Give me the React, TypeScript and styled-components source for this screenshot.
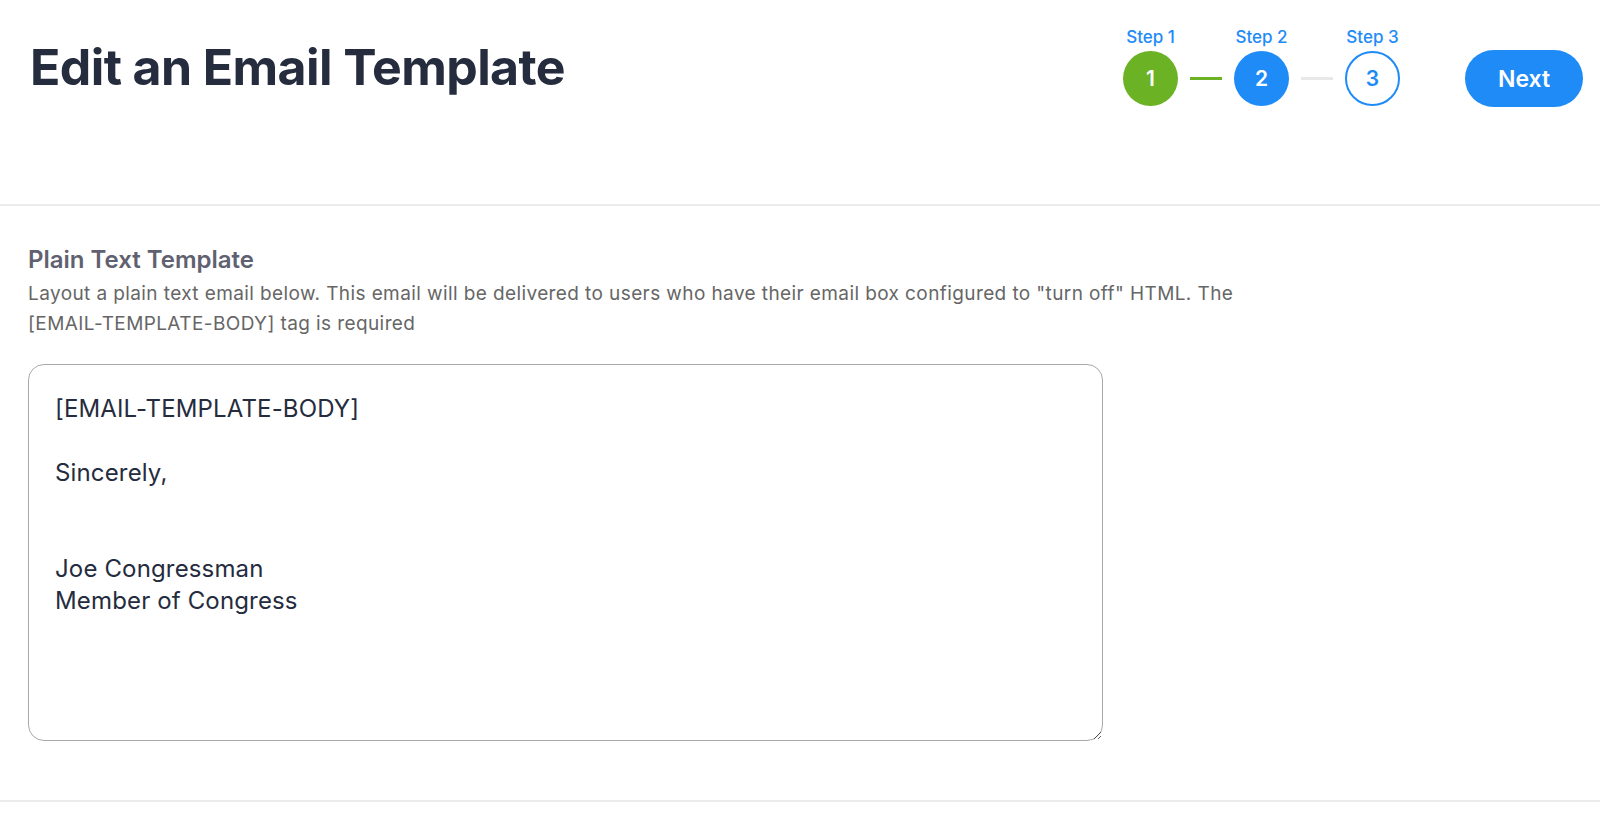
import React from "react";
import styled, { createGlobalStyle } from "styled-components";

const GlobalStyle = createGlobalStyle`
  body {
    margin: 0;
    background: #ffffff;
    font-family: "Inter", "Lato", sans-serif;
    color: #252c3e;
  }
`;

const steps = [
  { label: "Step 1", state: "done" },
  { label: "Step 2", state: "active" },
  { label: "Step 3", state: "todo" },
] as const;

type StepState = (typeof steps)[number]["state"];

export default function App() {
  return (
    <>
      <GlobalStyle />
      <Header>
        <Title>Edit an Email Template</Title>
        <Actions>
          <Stepper>
            {steps.map((s, i) => (
              <React.Fragment key={s.label}>
                {i > 0 && <Connector $done={steps[i - 1].state === "done"} />}
                <StepItem>
                  <StepLabel>{s.label}</StepLabel>
                  <StepCircle $state={s.state}>{i + 1}</StepCircle>
                </StepItem>
              </React.Fragment>
            ))}
          </Stepper>
          <NextButton type="button">Next</NextButton>
        </Actions>
      </Header>
      <Section>
        <SectionTitle>Plain Text Template</SectionTitle>
        <SectionHint>
          Layout a plain text email below. This email will be delivered to users who have their
          email box configured to "turn off" HTML. The <Tag>[EMAIL-TEMPLATE-BODY]</Tag> tag is
          required
        </SectionHint>
        <Editor
          defaultValue={
            "[EMAIL-TEMPLATE-BODY]\n\nSincerely,\n\n\nJoe Congressman\nMember of Congress"
          }
        />
      </Section>
    </>
  );
}

const Header = styled.header`
  display: flex;
  justify-content: space-between;
  align-items: flex-start;
  height: 204px;
  padding: 0 17px 0 30px;
  border-bottom: 2px solid #ebebeb;
`;

const Title = styled.h1`
  margin: 37px 0 0;
  font-size: 50px;
  line-height: 60px;
  font-weight: 700;
  letter-spacing: -0.6px;
  color: #252c3e;
`;

const Actions = styled.div`
  display: flex;
  align-items: flex-end;
  gap: 65px;
  margin-top: 27px;
`;

const Stepper = styled.div`
  display: flex;
  align-items: flex-end;
`;

const StepItem = styled.div`
  display: flex;
  flex-direction: column;
  align-items: center;
  gap: 4px;
`;

const StepLabel = styled.span`
  font-size: 17px;
  line-height: 20px;
  font-weight: 500;
  color: #1e8bf7;
`;

const StepCircle = styled.div<{ $state: StepState }>`
  width: 55px;
  height: 55px;
  box-sizing: border-box;
  border-radius: 50%;
  display: flex;
  align-items: center;
  justify-content: center;
  font-size: 21px;
  font-weight: 600;
  background: ${(p) =>
    p.$state === "done" ? "#6bb324" : p.$state === "active" ? "#1e8bf7" : "#ffffff"};
  color: ${(p) => (p.$state === "todo" ? "#1e8bf7" : "#ffffff")};
  border: ${(p) => (p.$state === "todo" ? "2px solid #1e8bf7" : "none")};
`;

const Connector = styled.div<{ $done: boolean }>`
  width: 32px;
  height: 3px;
  margin: 0 12px 26px;
  background: ${(p) => (p.$done ? "#6bb324" : "#e8e8e8")};
`;

const NextButton = styled.button`
  width: 118px;
  height: 57px;
  margin-bottom: -1px;
  border: none;
  border-radius: 29px;
  background: #1e8bf7;
  color: #ffffff;
  font-family: "Inter", sans-serif;
  font-size: 23px;
  font-weight: 600;
  cursor: pointer;
`;

const Section = styled.section`
  padding: 40px 28px 59px;
  border-bottom: 2px solid #ebebeb;
`;

const SectionTitle = styled.h2`
  margin: 0;
  font-size: 24px;
  line-height: 28px;
  font-weight: 600;
  color: #5f6170;
`;

const SectionHint = styled.p`
  margin: 5px 0 25px;
  max-width: 1240px;
  font-size: 19px;
  line-height: 30px;
  letter-spacing: 0.4px;
  color: #666666;
`;

const Tag = styled.span`
  white-space: nowrap;
`;

const Editor = styled.textarea`
  display: block;
  box-sizing: border-box;
  width: 1075px;
  height: 377px;
  padding: 28px 26px;
  border: 1px solid #a9a9a9;
  border-radius: 16px;
  font-family: "Inter", sans-serif;
  font-size: 24px;
  line-height: 32px;
  letter-spacing: 0.15px;
  color: #252c3e;
  resize: vertical;
  outline: none;
`;
